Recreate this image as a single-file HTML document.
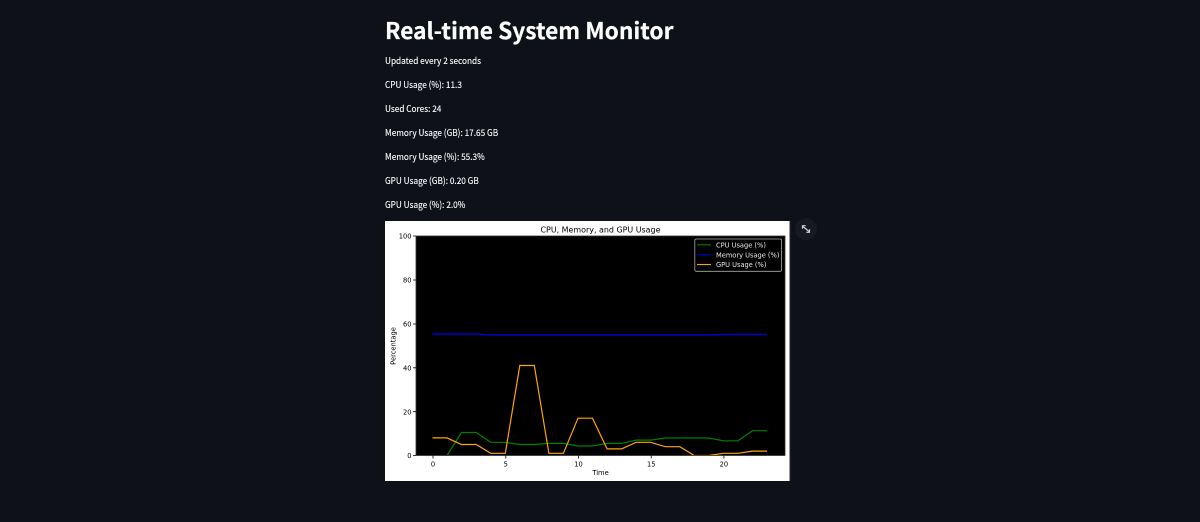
<!DOCTYPE html>
<html><head><meta charset="utf-8"><style>
html,body{margin:0;padding:0;width:1200px;height:522px;overflow:hidden;background:#0e1117}
body{position:relative;font-family:"Noto Sans CJK JP","Liberation Sans",sans-serif;color:#fff}
h1{position:absolute;left:385px;top:10px;margin:0;font-size:22.7px;line-height:40px;font-weight:700;white-space:nowrap;-webkit-text-stroke:0.2px #fff}
p{position:absolute;left:385px;margin:0;font-size:9.2px;line-height:16px;white-space:nowrap;font-weight:400;transform:scaleX(.897);transform-origin:0 50%;-webkit-text-stroke:0.12px #fff}
svg{position:absolute;left:0;top:0}
svg text{font-family:"DejaVu Sans",sans-serif}
</style></head><body>
<h1>Real-time System Monitor</h1>
<p style="top:52px">Updated every 2 seconds</p>
<p style="top:76px">CPU Usage (%): 11.3</p>
<p style="top:100px">Used Cores: 24</p>
<p style="top:124px">Memory Usage (GB): 17.65 GB</p>
<p style="top:148px">Memory Usage (%): 55.3%</p>
<p style="top:172px">GPU Usage (GB): 0.20 GB</p>
<p style="top:196px">GPU Usage (%): 2.0%</p>
<svg width="1200" height="522" viewBox="0 0 1200 522">
<rect x="385" y="221" width="404.5" height="260" fill="#fff"/>
<rect x="789.5" y="221" width="1" height="260" fill="#2a2c32"/>
<rect x="416" y="236" width="369" height="219.5" fill="#000"/>
<g fill="none" stroke-width="1.2" stroke-linejoin="miter">
<polyline stroke="#008000" points="432.500,477 447,455.500 461.500,432.500 476.200,432.500 490.700,442.300 505.300,442.300 519.800,444.500 534.300,444.500 548.900,443.400 563.400,443.400 578,446 592.500,446 607.100,443.400 621.600,443.400 636.100,440.100 650.700,440.100 665.200,438 679.800,438 694.300,438 708.900,438 723.400,440.800 737.900,440.800 752.500,430.700 767,430.700"/>
<polyline stroke="#0000c8" stroke-width="1.5" points="432.500,334 476.200,334 490.700,335 578,335 650.700,335 708.900,335 737.900,334.200 767,334.600"/>
<polyline stroke="#ffa500" points="432.500,437.900 447,437.900 461.500,444.500 476.200,444.500 490.700,453.300 505.300,453.300 519.800,365.500 534.300,365.500 548.900,453.300 563.400,453.300 578,418.200 592.500,418.200 607.100,448.900 621.600,448.900 636.100,442.300 650.700,442.300 665.200,446.700 679.800,446.700 694.300,455.500 708.900,455.500 723.400,453.300 737.900,453.300 752.500,451.100 767,451.100"/>
</g>
<rect x="385" y="455.900" width="404.500" height="25.100" fill="#fff"/>
<rect x="416" y="236" width="369" height="219.500" fill="none" stroke="#333" stroke-width="0.8"/>
<g stroke="#000" stroke-width="0.8">
<path d="M413 236H416M413 280H416M413 324H416M413 367.800H416M413 411.700H416M413 455.500H416"/>
<path d="M433 455.500V458.500M505.800 455.500V458.500M578.500 455.500V458.500M651.200 455.500V458.500M723.900 455.500V458.500"/>
</g>
<g font-size="6.700" fill="#000">
<g text-anchor="end">
<text x="411.500" y="238.700">100</text>
<text x="411.500" y="282.600">80</text>
<text x="411.500" y="326.500">60</text>
<text x="411.500" y="370.400">40</text>
<text x="411.500" y="414.300">20</text>
<text x="411.500" y="458.200">0</text>
</g>
<g text-anchor="middle">
<text x="433" y="466.300">0</text>
<text x="505.800" y="466.300">5</text>
<text x="578.500" y="466.300">10</text>
<text x="651.200" y="466.300">15</text>
<text x="723.900" y="466.300">20</text>
<text x="600.500" y="475">Time</text>
<text transform="translate(395.500 346) rotate(-90)">Percentage</text>
</g>
<text x="600.500" y="232.300" text-anchor="middle" font-size="7.950">CPU, Memory, and GPU Usage</text>
</g>
<rect x="694.800" y="239" width="86.800" height="32.300" rx="1.500" fill="#000" stroke="#aaa" stroke-width="0.800"/>
<path d="M697 244.800H711" stroke="#008000" stroke-width="1.100"/>
<path d="M697 254.700H711" stroke="#0000e0" stroke-width="1.100"/>
<path d="M697 264.500H711" stroke="#ffa500" stroke-width="1.100"/>
<g font-size="6.650" fill="#e8e8e8">
<text x="716" y="247.500">CPU Usage (%)</text>
<text x="716" y="257.400">Memory Usage (%)</text>
<text x="716" y="267.200">GPU Usage (%)</text>
</g>
<circle cx="806" cy="229" r="11" fill="#161920"/>
<g fill="none" stroke="#d0d1d4" stroke-width="1.200">
<path d="M803 226.500L809 231.500"/>
<path d="M802.500 228.700V225.700H805.700"/>
<path d="M809.500 229.300V232.300H806.300"/>
</g>
</svg>
</body></html>
